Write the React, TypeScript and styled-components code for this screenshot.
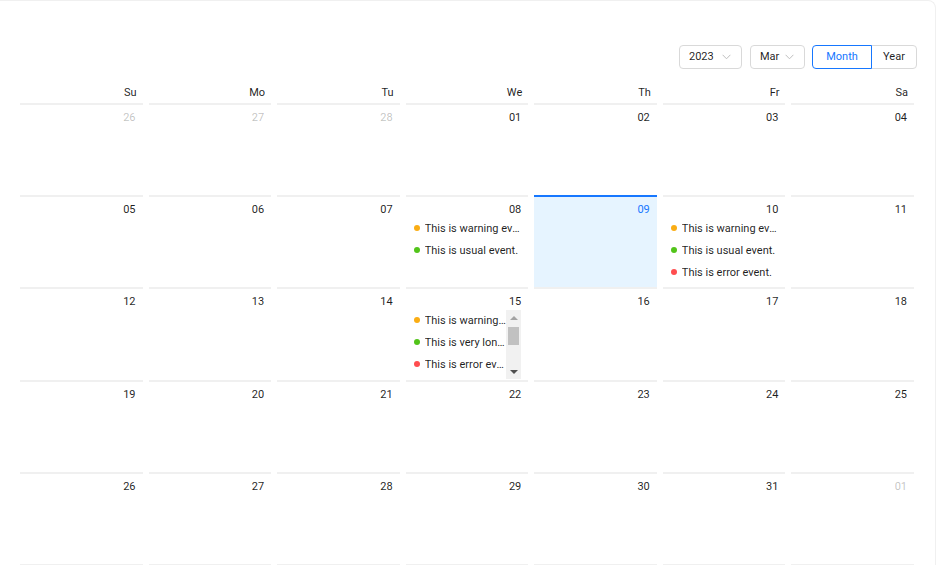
import React from "react";
import styled, { createGlobalStyle } from "styled-components";

type EventType = "warning" | "success" | "error";

interface CalEvent {
  type: EventType;
  content: string;
}

const GlobalStyle = createGlobalStyle`
  html, body {
    margin: 0;
    padding: 0;
    background: #ffffff;
    overflow: hidden;
  }
  body {
    font-family: Roboto, "Liberation Sans", sans-serif;
    font-size: 11px;
    color: rgba(0, 0, 0, 0.88);
  }
  * {
    box-sizing: border-box;
  }
`;

const dotColors: Record<EventType, string> = {
  warning: "#faad14",
  success: "#52c41a",
  error: "#ff4d4f",
};

const events: Record<number, CalEvent[]> = {
  8: [
    { type: "warning", content: "This is warning event." },
    { type: "success", content: "This is usual event." },
  ],
  10: [
    { type: "warning", content: "This is warning event." },
    { type: "success", content: "This is usual event." },
    { type: "error", content: "This is error event." },
  ],
  15: [
    { type: "warning", content: "This is warning event" },
    { type: "success", content: "This is very long usual event......" },
    { type: "error", content: "This is error event 1." },
    { type: "error", content: "This is error event 2." },
    { type: "error", content: "This is error event 3." },
    { type: "error", content: "This is error event 4." },
  ],
};

const weekDays = ["Su", "Mo", "Tu", "We", "Th", "Fr", "Sa"];

interface Day {
  date: number;
  inMonth: boolean;
}

// March 2023 starts on a Wednesday, so the grid opens on Feb 26
const buildWeeks = (): Day[][] => {
  const days: Day[] = [];
  [26, 27, 28].forEach((d) => days.push({ date: d, inMonth: false }));
  for (let d = 1; d <= 31; d++) days.push({ date: d, inMonth: true });
  let next = 1;
  while (days.length < 42) days.push({ date: next++, inMonth: false });
  const weeks: Day[][] = [];
  for (let i = 0; i < 42; i += 7) weeks.push(days.slice(i, i + 7));
  return weeks;
};

const ChevronDown = () => (
  <svg width="9" height="6" viewBox="0 0 9 6" fill="none">
    <path d="M0.6 0.8L4.5 4.8L8.4 0.8" stroke="#bfbfbf" strokeWidth="1" />
  </svg>
);

const App: React.FC = () => {
  const weeks = buildWeeks();

  return (
    <>
      <GlobalStyle />
      <Card>
        <Header>
          <Select $width={63}>
            <span>2023</span>
            <Arrow>
              <ChevronDown />
            </Arrow>
          </Select>
          <Select $width={55}>
            <span>Mar</span>
            <Arrow>
              <ChevronDown />
            </Arrow>
          </Select>
          <RadioGroup>
            <RadioButton $active $first $width={60}>
              Month
            </RadioButton>
            <RadioButton $width={46}>Year</RadioButton>
          </RadioGroup>
        </Header>
        <Table>
          <thead>
            <tr>
              {weekDays.map((d) => (
                <HeadCell key={d}>{d}</HeadCell>
              ))}
            </tr>
          </thead>
          <tbody>
            {weeks.map((week, wi) => (
              <tr key={wi}>
                {week.map((day, di) => {
                  const selected = day.inMonth && day.date === 9;
                  const list = day.inMonth ? events[day.date] : undefined;
                  const scroll = !!list && list.length > 3;
                  return (
                    <BodyCell key={di}>
                      <DateBox $selected={selected}>
                        <DateValue $muted={!day.inMonth} $selected={selected}>
                          {String(day.date).padStart(2, "0")}
                        </DateValue>
                        <DateContent>
                          {list && (
                            <EventList>
                              {list.map((ev, i) => (
                                <EventItem key={i}>
                                  <Dot $type={ev.type} />
                                  <EventText>{ev.content}</EventText>
                                </EventItem>
                              ))}
                            </EventList>
                          )}
                          {scroll && (
                            <ScrollBar>
                              <ScrollArrow $dir="up" />
                              <ScrollThumb />
                              <ScrollArrow $dir="down" />
                            </ScrollBar>
                          )}
                        </DateContent>
                      </DateBox>
                    </BodyCell>
                  );
                })}
              </tr>
            ))}
          </tbody>
        </Table>
      </Card>
    </>
  );
};

const Card = styled.div`
  width: 936px;
  height: 565px;
  border: 1px solid #f0f0f0;
  border-left: none;
  border-bottom: none;
  border-top-right-radius: 8px;
  padding: 44px 18px 0 17px;
  overflow: hidden;
`;

const Header = styled.div`
  display: flex;
  justify-content: flex-end;
  align-items: center;
  gap: 8px;
  height: 24px;
`;

const Select = styled.div<{ $width: number }>`
  position: relative;
  width: ${({ $width }) => $width}px;
  height: 24px;
  border: 1px solid #d9d9d9;
  border-radius: 4px;
  padding: 0 9px;
  display: flex;
  align-items: center;
  line-height: 22px;
  color: rgba(0, 0, 0, 0.88);
`;

const Arrow = styled.span`
  position: absolute;
  right: 10px;
  top: 50%;
  margin-top: -3px;
  display: flex;
`;

const RadioGroup = styled.div`
  display: flex;
  margin-left: -1px;
`;

const RadioButton = styled.div<{ $active?: boolean; $first?: boolean; $width: number }>`
  width: ${({ $width }) => $width}px;
  height: 24px;
  line-height: 22px;
  text-align: center;
  border: 1px solid ${({ $active }) => ($active ? "#1677ff" : "#d9d9d9")};
  color: ${({ $active }) => ($active ? "#1677ff" : "rgba(0, 0, 0, 0.88)")};
  border-radius: ${({ $first }) => ($first ? "4px 0 0 4px" : "0 4px 4px 0")};
  margin-left: ${({ $first }) => ($first ? "0" : "-1px")};
  position: relative;
  z-index: ${({ $active }) => ($active ? 1 : 0)};
  background: #ffffff;
`;

const Table = styled.table`
  width: 900px;
  table-layout: fixed;
  border-collapse: collapse;
  border-spacing: 0;
`;

const HeadCell = styled.th`
  padding: 16px 9px 2px 0;
  line-height: 16px;
  font-weight: 400;
  text-align: right;
  color: rgba(0, 0, 0, 0.88);
`;

const BodyCell = styled.td`
  padding: 0;
  vertical-align: top;
`;

const DateBox = styled.div<{ $selected?: boolean }>`
  margin: 0 3px;
  padding: 4px 7px 0 7px;
  border-top: 2px solid ${({ $selected }) => ($selected ? "#1677ff" : "#f0f0f0")};
  background: ${({ $selected }) => ($selected ? "#e6f4ff" : "transparent")};
  height: 92.2px;
`;

const DateValue = styled.div<{ $muted?: boolean; $selected?: boolean }>`
  text-align: right;
  line-height: 17px;
  color: ${({ $muted, $selected }) =>
    $selected ? "#1677ff" : $muted ? "rgba(0, 0, 0, 0.25)" : "rgba(0, 0, 0, 0.88)"};
`;

const DateContent = styled.div`
  display: flex;
  height: 69px;
  overflow: hidden;
`;

const EventList = styled.ul`
  flex: 1;
  min-width: 0;
  list-style: none;
  margin: 0;
  padding: 0;
`;

const EventItem = styled.li`
  display: flex;
  align-items: center;
  height: 20px;
  margin-bottom: 2px;
  white-space: nowrap;
  overflow: hidden;
`;

const Dot = styled.span<{ $type: EventType }>`
  flex: none;
  width: 6px;
  height: 6px;
  border-radius: 50%;
  background: ${({ $type }) => dotColors[$type]};
  margin-left: 1px;
  margin-right: 5px;
`;

const EventText = styled.span`
  overflow: hidden;
  text-overflow: ellipsis;
  white-space: nowrap;
  color: rgba(0, 0, 0, 0.88);
`;

const ScrollBar = styled.div`
  flex: none;
  width: 15px;
  height: 100%;
  background: #f1f1f1;
  display: flex;
  flex-direction: column;
  align-items: center;
`;

const ScrollArrow = styled.div<{ $dir: "up" | "down" }>`
  flex: none;
  width: 15px;
  height: 15px;
  display: flex;
  align-items: center;
  justify-content: center;
  margin-top: ${({ $dir }) => ($dir === "down" ? "auto" : "0")};

  &::before {
    content: "";
    width: 0;
    height: 0;
    border-left: 4px solid transparent;
    border-right: 4px solid transparent;
    ${({ $dir }) =>
      $dir === "up"
        ? "border-bottom: 4px solid #a3a3a3;"
        : "border-top: 4px solid #505050;"}
  }
`;

const ScrollThumb = styled.div`
  flex: none;
  width: 11px;
  height: 18px;
  margin-top: 2px;
  background: #c1c1c1;
`;

export default App;
